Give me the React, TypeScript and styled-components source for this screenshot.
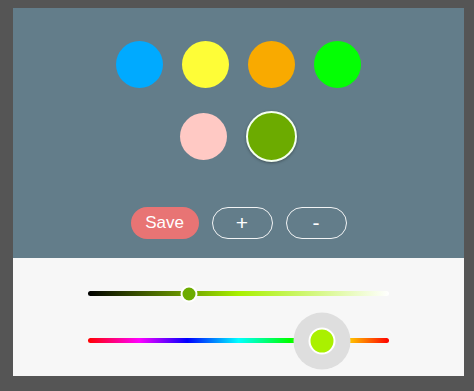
import React from "react"
import styled, { createGlobalStyle } from "styled-components"

const GlobalStyle = createGlobalStyle`
    html, body {
        margin: 0;
        padding: 0;
        background: #555555;
        font-family: "Liberation Sans", Arial, sans-serif;
    }
`

const swatches = ["#00aaff", "#fefd37", "#f9aa00", "#04ff04"]
const savedSwatches = ["#ffc9c4"]
const selected = "#6cab00"

const Frame = styled.div`
    width: 474px;
    height: 391px;
    box-sizing: border-box;
    padding: 8px 10px 15px 13px;
    display: flex;
    flex-direction: column;
`

const Picker = styled.div`
    height: 250px;
    background: #637d8a;
    display: flex;
    flex-direction: column;
    align-items: center;
    padding-top: 31px;
    box-sizing: border-box;
`

const SwatchRow = styled.div<{ $gap: number }>`
    height: 51px;
    display: flex;
    align-items: center;
    gap: 19px;
    margin-bottom: ${p => p.$gap}px;
`

const Swatch = styled.div<{ $color: string; $active?: boolean }>`
    width: 47px;
    height: 47px;
    border-radius: 50%;
    background: ${p => p.$color};
    border: ${p => (p.$active ? "2px solid #f4fff0" : "none")};
    box-shadow: ${p => (p.$active ? "0 1px 3px rgba(0,0,0,0.35)" : "none")};
    flex: none;
`

const ButtonRow = styled.div`
    display: flex;
    gap: 13px;
`

const Button = styled.button<{ $primary?: boolean }>`
    height: 32px;
    width: ${p => (p.$primary ? 68 : 61)}px;
    border-radius: 16px;
    box-sizing: border-box;
    border: ${p => (p.$primary ? "none" : "1px solid #f2f4f5")};
    background: ${p => (p.$primary ? "#e87474" : "transparent")};
    color: #ffffff;
    font-family: "Liberation Sans", Arial, sans-serif;
    font-size: ${p => (p.$primary ? 17 : 21)}px;
    padding: 0;
    display: flex;
    align-items: center;
    justify-content: center;
`

const Sliders = styled.div`
    flex: 1;
    background: #f7f7f7;
    display: flex;
    flex-direction: column;
    padding: 33px 75px 0 75px;
    gap: 42px;
`

const Track = styled.div<{ $bg: string }>`
    position: relative;
    height: 5px;
    border-radius: 3px;
    background: ${p => p.$bg};
`

const Halo = styled.div`
    position: absolute;
    top: 50%;
    width: 57px;
    height: 57px;
    border-radius: 50%;
    background: #dedede;
    transform: translate(-50%, -50%);
`

const Thumb = styled.div<{ $size: number; $color: string }>`
    position: absolute;
    top: 50%;
    width: ${p => p.$size}px;
    height: ${p => p.$size}px;
    box-sizing: border-box;
    border-radius: 50%;
    border: 2px solid #ffffff;
    background: ${p => p.$color};
    transform: translate(-50%, -50%);
`

const Slider = ({ value, bg, color, size, active }: { value: number; bg: string; color: string; size: number; active?: boolean }) => (
    <Track $bg={bg}>
        {active && <Halo style={{ left: `${value * 100}%` }} />}
        <Thumb $size={size} $color={color} style={{ left: `${value * 100}%` }} />
    </Track>
)

export default function App() {
    return (
        <Frame>
            <GlobalStyle />
            <Picker>
                <SwatchRow $gap={21}>
                    {swatches.map(c => <Swatch key={c} $color={c} />)}
                </SwatchRow>
                <SwatchRow $gap={45}>
                    {savedSwatches.map(c => <Swatch key={c} $color={c} />)}
                    <Swatch $color={selected} $active />
                </SwatchRow>
                <ButtonRow>
                    <Button $primary>Save</Button>
                    <Button>+</Button>
                    <Button>-</Button>
                </ButtonRow>
            </Picker>
            <Sliders>
                <Slider value={0.335} size={17} color={selected} bg="linear-gradient(to right, #000000, #a8f000 50%, #ffffff)" />
                <Slider
                    value={0.776}
                    size={27}
                    color="#aaf000"
                    active
                    bg="linear-gradient(to right, #ff0000, #ff00ff 17%, #0000ff 33%, #00ffff 50%, #00ff00 67%, #ffff00 83%, #ff0000)"
                />
            </Sliders>
        </Frame>
    )
}
